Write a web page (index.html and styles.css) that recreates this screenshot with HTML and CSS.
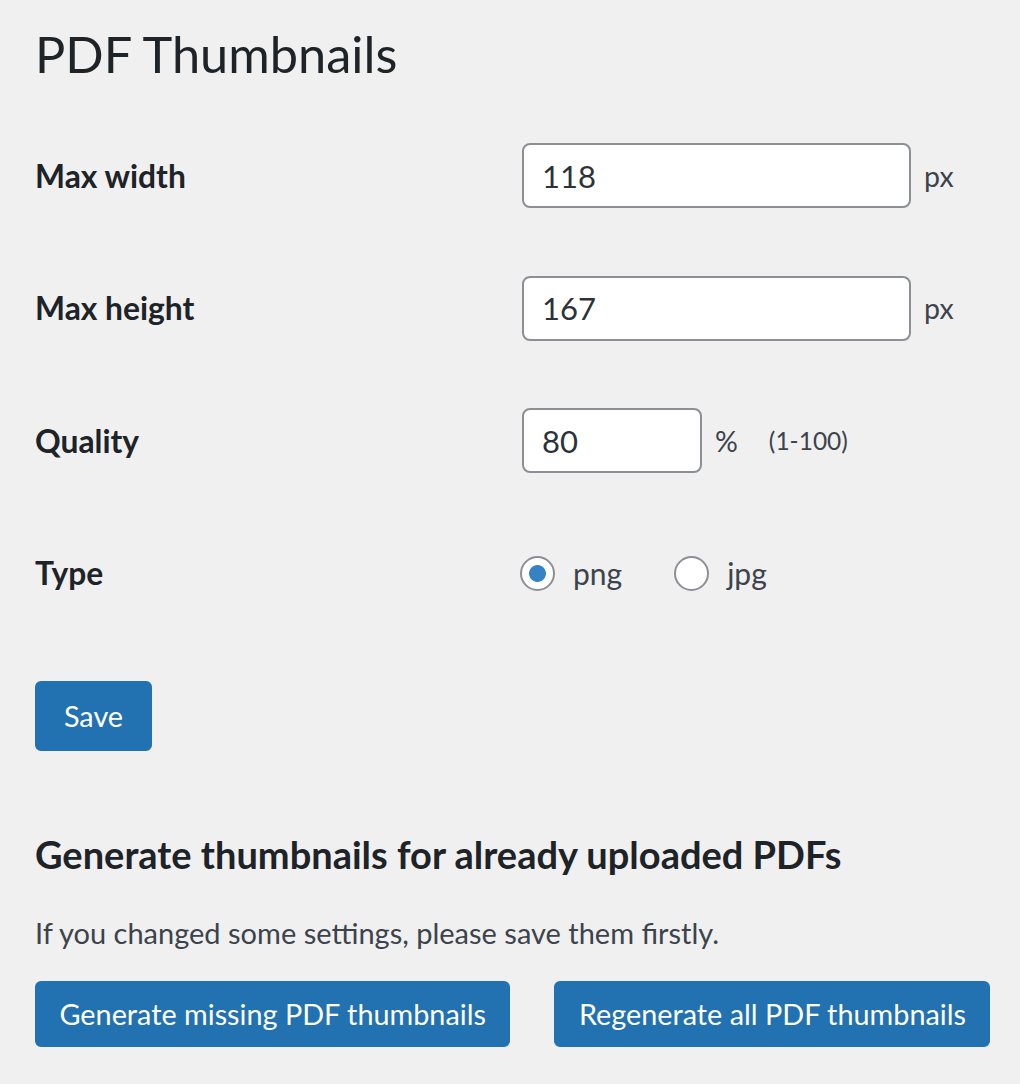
FILE: index.html
```html
<!DOCTYPE html>
<html lang="en">
<head>
<meta charset="utf-8">
<title>PDF Thumbnails</title>
<link rel="stylesheet" href="styles.css">
</head>
<body>
<div class="wrap">
  <h1 class="page-title">PDF Thumbnails</h1>
  <form class="settings-form">
    <div class="settings">
      <label class="label" for="mw">Max width</label>
      <div class="field">
        <input id="mw" class="input input-wide" type="text" value="118">
        <span class="unit">px</span>
      </div>

      <label class="label" for="mh">Max height</label>
      <div class="field">
        <input id="mh" class="input input-wide" type="text" value="167">
        <span class="unit">px</span>
      </div>

      <label class="label" for="q">Quality</label>
      <div class="field">
        <input id="q" class="input input-narrow" type="text" value="80">
        <span class="unit">%</span>
        <span class="hint">(1-100)</span>
      </div>

      <span class="label">Type</span>
      <div class="field radios">
        <label class="radio-item"><input class="radio" type="radio" name="type" checked><span>png</span></label>
        <label class="radio-item"><input class="radio" type="radio" name="type"><span>jpg</span></label>
      </div>
    </div>
    <div class="submit-row">
      <button type="button" class="btn btn-save">Save</button>
    </div>
  </form>

  <h2 class="section-title">Generate thumbnails for already uploaded PDFs</h2>
  <p class="note">If you changed some settings, please save them firstly.</p>
  <div class="actions">
    <button type="button" class="btn">Generate missing PDF thumbnails</button>
    <button type="button" class="btn">Regenerate all PDF thumbnails</button>
  </div>
</div>
</body>
</html>
```

FILE: styles.css
```css
* { box-sizing: border-box; }

body {
  margin: 0;
  background: #f0f0f1;
  color: #3c434a;
  font-family: Lato, "Open Sans", sans-serif;
}

.wrap {
  padding-left: 35px;
}

.page-title {
  margin: 0;
  padding-top: 24px;
  font-size: 50.5px;
  line-height: 60px;
  font-weight: 400;
  color: #1d2327;
}

.settings {
  display: grid;
  grid-template-columns: 487px auto;
  grid-auto-rows: 65px;
  row-gap: 67.5px;
  align-items: center;
  margin-top: 59px;
}

.label {
  font-size: 31.8px;
  font-weight: 700;
  color: #1d2327;
}

.field {
  display: flex;
  align-items: center;
}

.input {
  height: 65px;
  margin: 0;
  padding: 0 18px;
  border: 2px solid #8c8f94;
  border-radius: 8px;
  background: #fff;
  color: #2c3338;
  font-family: inherit;
  font-size: 31px;
  outline: none;
}

.input-wide { width: 389px; }
.input-narrow { width: 180px; }

.unit {
  margin-left: 13px;
  font-size: 28.5px;
}

.hint {
  margin-left: 31px;
  font-size: 24.5px;
}

.radios {
  margin-left: -2px;
}

.radio-item {
  display: flex;
  align-items: center;
  gap: 18px;
  margin-right: 52px;
  font-size: 30px;
  color: #3c434a;
}

.radio {
  appearance: none;
  width: 35px;
  height: 35px;
  margin: 0;
  border: 2px solid #8c8f94;
  border-radius: 50%;
  background: #fff;
}

.radio:checked {
  background: radial-gradient(circle, #3582c4 0 8px, #fff 8.8px);
}

.submit-row {
  margin-top: 75.5px;
}

.btn {
  height: 66px;
  margin: 0;
  padding: 0 22.5px;
  border: 2px solid #2271b1;
  border-radius: 6px;
  background: #2271b1;
  color: #fff;
  font-family: inherit;
  font-size: 28.8px;
  cursor: pointer;
}

.btn-save {
  height: 70px;
  width: 117px;
  padding: 0;
}

.section-title {
  margin: 80px 0 0;
  font-size: 38px;
  line-height: 46px;
  font-weight: 700;
  color: #1d2327;
}

.note {
  margin: 37.5px 0 0;
  font-size: 29px;
  line-height: 36px;
}

.actions {
  display: flex;
  gap: 44px;
  margin-top: 30px;
}
```
